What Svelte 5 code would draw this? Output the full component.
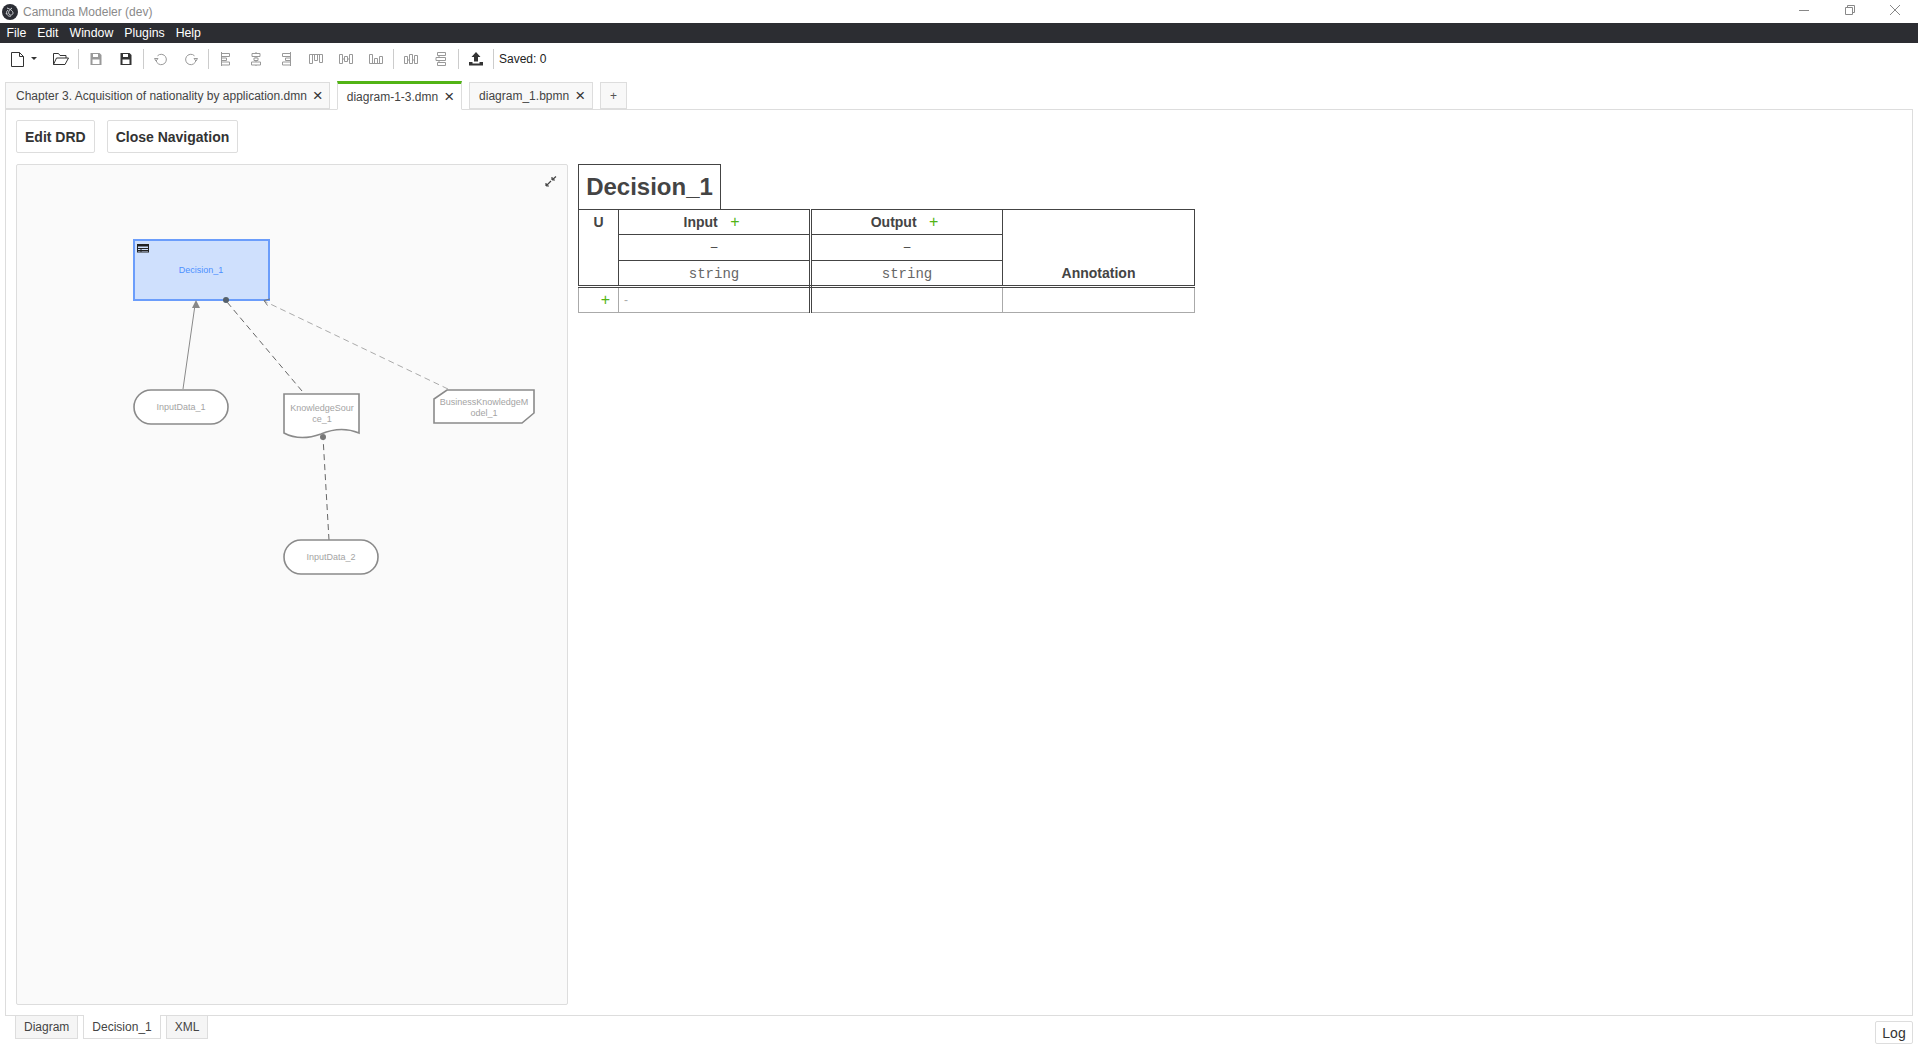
<script>
	const menu = ['File', 'Edit', 'Window', 'Plugins', 'Help'];
	const tabs = [
		{ name: 'Chapter 3. Acquisition of nationality by application.dmn' },
		{ name: 'diagram-1-3.dmn', active: true },
		{ name: 'diagram_1.bpmn' }
	];
	const editorTabs = ['Diagram', 'Decision_1', 'XML'];

	// toolbar groups, separated by a thin rule
	const groups = [
		['save', 'saveAll'],
		['undo', 'redo'],
		['alignLeft', 'alignCenter', 'alignRight', 'alignTop', 'alignMiddle', 'alignBottom'],
		['distH', 'distV'],
		['export']
	];

	const floppy = 'M1.5 1h9l2 2v10h-11zM4 2v3h5V2zM3.5 7.500V12h7V7.500z';

	const icons = {
		save: { cls: 'fill dim', d: floppy },
		saveAll: { cls: 'fill', d: floppy },
		undo: { cls: 'line dim', d: 'M3.500 3.800A5.200 5.200 0 1 1 2 8M.5 6.500h3.500L2 9z' },
		redo: { cls: 'line dim', d: 'M10.500 3.800A5.200 5.200 0 1 0 12 8M13.500 6.500H10L12 9z' },
		alignLeft: { cls: 'line dim', d: 'M2.500 0v14M2.500 1.500h8v3h-8M2.500 6h5v2.500h-5M2.500 10h8v3h-8' },
		alignCenter: { cls: 'line dim', d: 'M3 1.500h8v3H3zM5 6h4v2.500H5zM2.500 10h9v3h-9zM7 0v1.500M7 4.500V6M7 8.500V10M7 13v1' },
		alignRight: { cls: 'line dim', d: 'M11.500 0v14M11.500 1.500h-8v3h8M11.500 6h-5v2.500h5M11.500 10h-8v3h8' },
		alignTop: { cls: 'line dim', d: 'M.5 2.500h13M.5 2.500v9h3v-9M5.500 2.500v6h3v-6M10.500 2.500v8h3v-8' },
		alignMiddle: { cls: 'line dim', d: 'M.5 2.500h3v9h-3zM5.500 4.500h3v5h-3zM10.500 2.500h3v9h-3zM3.500 7h2M8.500 7h2' },
		alignBottom: { cls: 'line dim', d: 'M.5 11.500h13M.5 11.500v-9h3v9M5.500 11.500v-5h3v5M10.500 11.500v-7h3v7' },
		distH: { cls: 'line dim', d: 'M.5 4.500h3v7h-3zM5.500 2.500h3v9h-3zM10.500 3.500h3v8h-3zM3.500 8h2M8.500 8h2' },
		distV: { cls: 'line dim', d: 'M3.500 .5h8v3h-8zM2 5.500h9.500v3H2zM3.500 10.500h8v3h-8zM5 3.500v2M5 8.500v2' },
		export: { cls: 'fill', d: 'M7 0l4.500 5H9v4.500H5V5H2.500zM0 10h3.500v1.500h7V10H14v3.500H0z' }
	};
</script>

<div class="app">
	<header class="titlebar">
		<svg class="logo" viewBox="0 0 16 16" aria-hidden="true">
			<circle cx="8" cy="8" r="8" fill="#2c2e35" />
			<path d="M5 4c3 1 6 3 6 5s-3 3-4 1 0-4 3-6M4 9c1 2 3 4 5 3M6 6c-1 1-2 2-1 4" fill="none" stroke="#d5d8dc" stroke-width="1" />
		</svg>
		<span class="app-title">Camunda Modeler (dev)</span>
		<div class="window-controls">
			<svg viewBox="0 0 10 10"><path d="M0 5.500h10" /></svg>
			<svg viewBox="0 0 10 10"><path d="M.5 2.500h7v7h-7zM2.500 2.500v-2h7v7h-2" /></svg>
			<svg viewBox="0 0 10 10"><path d="M0 0l10 10M10 0L0 10" /></svg>
		</div>
	</header>

	<nav class="menubar">
		{#each menu as item}
			<span>{item}</span>
		{/each}
	</nav>

	<div class="toolbar">
		<span class="tool new">
			<svg class="page" viewBox="0 0 13 15">
				<path d="M.5.5h8l4 4v10H.5zM8.500.5v4h4" fill="none" stroke="#333" />
			</svg>
		</span>
		<span class="caret"></span>
		<span class="tool open">
			<svg viewBox="0 0 16 12" class="folder">
				<path d="M.5 11.500V.5h5l1.500 2h6v2.500M.5 11.500h11.500l3.500-6.500H3.500z" fill="none" stroke="#333" />
			</svg>
		</span>
		{#each groups as group}
			<span class="sep"></span>
			{#each group as name}
				<span class="tool">
					<svg viewBox="0 0 14 14" class={icons[name].cls}>
						<path d={icons[name].d} fill-rule="evenodd" />
					</svg>
				</span>
			{/each}
		{/each}
		<span class="sep"></span>
		<span class="saved">Saved: 0</span>
	</div>

	<div class="tabs">
		{#each tabs as tab}
			<div class="tab" class:active={tab.active}>
				<span>{tab.name}</span>
				<span class="close">×</span>
			</div>
		{/each}
		<div class="tab add">+</div>
	</div>

	<main class="content">
		<div class="actions">
			<button>Edit DRD</button>
			<button>Close Navigation</button>
		</div>
		<div class="split">
			<section class="drd">
				<svg class="drd-canvas" viewBox="17 164 551 840" aria-label="DRD">
					<!-- minimize -->
					<path d="M551 181l-5 5M546 186v-3M546 186h3M552 180l4-3.500M552 180v-3M552 180h3" fill="none" stroke="#444" stroke-width="1.200" />

					<rect class="decision" x="134" y="240" width="135" height="60" />
					<g fill="none" stroke="#222">
						<rect x="137.500" y="244.500" width="11" height="7.500" />
						<path d="M137.500 248.500h11M137.500 250.500h11M141 248.500V252" />
					</g>
					<rect x="137" y="244" width="12" height="2.500" fill="#222" />
					<text class="label selected" x="201" y="273">Decision_1</text>

					<path class="edge" d="M183 389l12-84" />
					<path d="M196 300l-4 8h8z" fill="#888" />

					<path class="edge dashed dark" d="M302 391l-75-89" />
					<circle cx="226" cy="300" r="3" fill="#55606b" />

					<path class="edge dashed" d="M448 389l-184-88" />
					<path d="M270 299l-6 1.500 3.500 5" fill="none" stroke="#777" />

					<path class="edge dashed dark" d="M329 540l-6-103" />
					<circle cx="323" cy="437" r="3" fill="#777" />

					<rect class="shape" x="134" y="390" width="94" height="34" rx="17" />
					<text class="label" x="181" y="410">InputData_1</text>

					<path class="shape" d="M284 394h75v39c-12-5-24-5-38 1-14 5-26 5-37-1z" />
					<text class="label" x="322" y="411">KnowledgeSour</text>
					<text class="label" x="322" y="422">ce_1</text>

					<path class="shape" d="M447 390h87v23l-12 10h-88v-24z" />
					<text class="label" x="484" y="405">BusinessKnowledgeM</text>
					<text class="label" x="484" y="416">odel_1</text>

					<rect class="shape" x="284" y="540" width="94" height="34" rx="17" />
					<text class="label" x="331" y="560">InputData_2</text>
				</svg>
			</section>

			<section class="decision-table">
				<h1>Decision_1</h1>
				<table>
					<colgroup>
						<col style="width:40px" />
						<col style="width:192px" />
						<col style="width:192px" />
						<col style="width:192px" />
					</colgroup>
					<thead>
						<tr class="row-a">
							<th rowspan="3" class="hit">U</th>
							<th class="split-col io">Input <span class="plus">+</span></th>
							<th class="io">Output <span class="plus">+</span></th>
							<th rowspan="3" class="annotation">Annotation</th>
						</tr>
						<tr class="row-b">
							<td class="split-col dash">–</td>
							<td class="dash">–</td>
						</tr>
						<tr class="row-c">
							<td class="split-col mono">string</td>
							<td class="mono">string</td>
						</tr>
					</thead>
					<tbody>
						<tr>
							<td class="add-rule"><span class="plus">+</span></td>
							<td class="entry split-col">-</td>
							<td></td>
							<td></td>
						</tr>
					</tbody>
				</table>
			</section>
		</div>
	</main>

	<footer class="footer">
		{#each editorTabs as tab}
			<div class="editor-tab" class:active={tab === 'Decision_1'}>{tab}</div>
		{/each}
		<button class="log">Log</button>
	</footer>
</div>

<style>
	:global(body) {
		margin: 0;
		background: #fff;
	}

	.app {
		height: 100vh;
		display: flex;
		flex-direction: column;
		font-family: "Liberation Sans", Arial, sans-serif;
		font-size: 12px;
		color: #333;
		overflow: hidden;
	}

	.titlebar {
		height: 23px;
		flex: none;
		display: flex;
		align-items: center;
		padding-left: 2px;
	}

	.logo {
		width: 16px;
		height: 16px;
	}

	.app-title {
		margin-left: 5px;
		color: #8a8a8a;
		font-size: 12px;
	}

	.window-controls {
		margin-left: auto;
		display: flex;
		gap: 35.500px;
		padding-right: 18px;
		margin-top: -3px;
	}

	.window-controls svg {
		width: 10px;
		height: 10px;
		fill: none;
		stroke: #888;
		stroke-width: 1;
	}

	.menubar {
		height: 20px;
		flex: none;
		background: #2c2d32;
		color: #fff;
		display: flex;
		align-items: center;
		padding-left: 1px;
		font-size: 12.300px;
		line-height: 20px;
	}

	.menubar span {
		padding: 0 5.500px;
	}

	.toolbar {
		height: 37px;
		box-sizing: border-box;
		flex: none;
		display: flex;
		align-items: center;
		padding: 0 0 5px 3px;
	}

	.tool {
		width: 30px;
		height: 20px;
		display: flex;
		align-items: center;
		justify-content: center;
	}

	.tool svg {
		width: 14px;
		height: 14px;
	}

	.tool.new {
		width: 28px;
	}

	.tool svg.page {
		width: 13px;
		height: 15px;
	}

	.tool svg.folder {
		width: 16px;
		height: 12px;
	}

	.caret {
		margin: 0 9px 2px 0;
		border: 3px solid transparent;
		border-top: 3px solid #333;
		border-bottom: 0;
	}

	.sep {
		width: 1px;
		height: 20px;
		margin: 0 2px;
		background: #ccc;
	}

	.fill {
		fill: #333;
	}

	.fill.dim {
		fill: #999;
	}

	.line {
		fill: none;
		stroke: #999;
		stroke-width: 1;
	}

	.saved {
		margin-left: 3px;
		font-size: 12px;
		color: #222;
	}

	.tabs {
		height: 29px;
		flex: none;
		display: flex;
		align-items: flex-end;
		padding-left: 5px;
		gap: 7px;
		position: relative;
	}

	.tab {
		height: 27px;
		box-sizing: border-box;
		display: flex;
		align-items: center;
		padding: 0 7px 0 9px;
		gap: 6px;
		background: #f8f8f8;
		border: 1px solid #ddd;
		color: #444;
		white-space: nowrap;
	}

	.tab:first-child {
		padding: 0 6px 0 10px;
	}

	.tab.active {
		height: 29px;
		background: #fff;
		border-top: 3px solid #52b415;
		border-bottom-color: #fff;
		position: relative;
		z-index: 1;
		margin-bottom: -1px;
	}

	.tab.add {
		padding: 0;
		width: 27px;
		justify-content: center;
		color: #555;
	}

	.close {
		font-size: 17px;
		line-height: 1;
		color: #333;
	}

	.content {
		flex: 1;
		min-height: 0;
		margin: 0 5px;
		border: 1px solid #ddd;
		padding: 10px 10px 10px;
		display: flex;
		flex-direction: column;
		gap: 11px;
	}

	.actions {
		display: flex;
		gap: 12px;
	}

	button {
		height: 33px;
		padding: 0 8px;
		background: #fff;
		border: 1px solid #ddd;
		border-radius: 2px;
		font: bold 14px "Liberation Sans", Arial, sans-serif;
		color: #333;
	}

	.split {
		flex: 1;
		min-height: 0;
		display: flex;
		gap: 10px;
	}

	.drd {
		width: 552px;
		flex: none;
		box-sizing: border-box;
		background: #fafafa;
		border: 1px solid #ddd;
		border-radius: 2px;
		position: relative;
	}

	.drd-canvas {
		position: absolute;
		left: 0;
		top: -1px;
		width: 551px;
		height: 840px;
	}

	.decision {
		fill: #cfe0fd;
		stroke: #6b9dfb;
		stroke-width: 2;
	}

	.shape {
		fill: #fff;
		stroke: #8a8a8a;
		stroke-width: 1.600;
	}

	.edge {
		fill: none;
		stroke: #8a8a8a;
		stroke-width: 1;
	}

	.edge.dashed {
		stroke-dasharray: 6 4;
		stroke: #aaa;
	}

	.edge.dark {
		stroke: #666;
	}

	.label {
		font-size: 9px;
		fill: #a4a4a4;
		text-anchor: middle;
	}

	.label.selected {
		fill: #4d90ff;
	}

	.decision-table {
		width: 616px;
		color: #444;
	}

	h1 {
		margin: 0;
		width: 143px;
		height: 45px;
		box-sizing: border-box;
		border: 1px solid #444;
		border-bottom: 0;
		font-size: 24px;
		line-height: 43px;
		text-align: center;
		font-weight: bold;
		color: #444;
	}

	table {
		width: 616px;
		table-layout: fixed;
		border-collapse: collapse;
		font-size: 14px;
	}

	th,
	td {
		padding: 0;
		border: 1px solid #444;
		text-align: center;
		font-size: 14px;
	}

	.row-a {
		height: 25px;
	}

	.row-b {
		height: 26px;
	}

	.row-c {
		height: 26px;
	}

	.hit {
		vertical-align: top;
		padding-top: 4px;
	}

	th.io {
		padding-right: 5px;
	}

	.annotation {
		vertical-align: bottom;
		padding-bottom: 4px;
	}

	.plus {
		color: #52b415;
		font-weight: normal;
		font-size: 16px;
		margin-left: 8.500px;
	}

	td.dash {
		font-size: 12px;
		padding-bottom: 2px;
	}

	.mono {
		font-family: "Liberation Mono", monospace;
		color: #666;
		padding-top: 2px;
	}

	.split-col {
		border-right: 3px double #444;
	}

	thead tr:last-child td,
	.hit,
	.annotation {
		border-bottom: 3px double #444;
	}

	tbody td {
		height: 24px;
		border-color: #aaa;
		border-top: 0;
	}

	tbody td.split-col {
		border-right: 3px double #444;
	}

	.add-rule {
		text-align: right;
		padding-right: 8px;
	}

	.add-rule .plus {
		margin: 0;
	}

	.entry {
		text-align: left;
		padding-left: 5px;
		color: #aaa;
		font-size: 12px;
	}

	.footer {
		height: 32px;
		flex: none;
		display: flex;
		align-items: flex-start;
		padding: 0 5px 0 15px;
		gap: 5px;
	}

	.editor-tab {
		height: 23px;
		box-sizing: border-box;
		line-height: 22px;
		padding: 0 8px;
		background: #f5f5f5;
		border: 1px solid #ddd;
		border-top: 0;
		color: #444;
	}

	.editor-tab.active {
		background: #fff;
		margin-top: -1px;
		height: 24px;
		line-height: 24px;
	}

	.log {
		margin: 5px 0 0 auto;
		height: 23px;
		width: 38px;
		padding: 0;
		font-weight: normal;
		font-size: 14px;
	}
</style>
